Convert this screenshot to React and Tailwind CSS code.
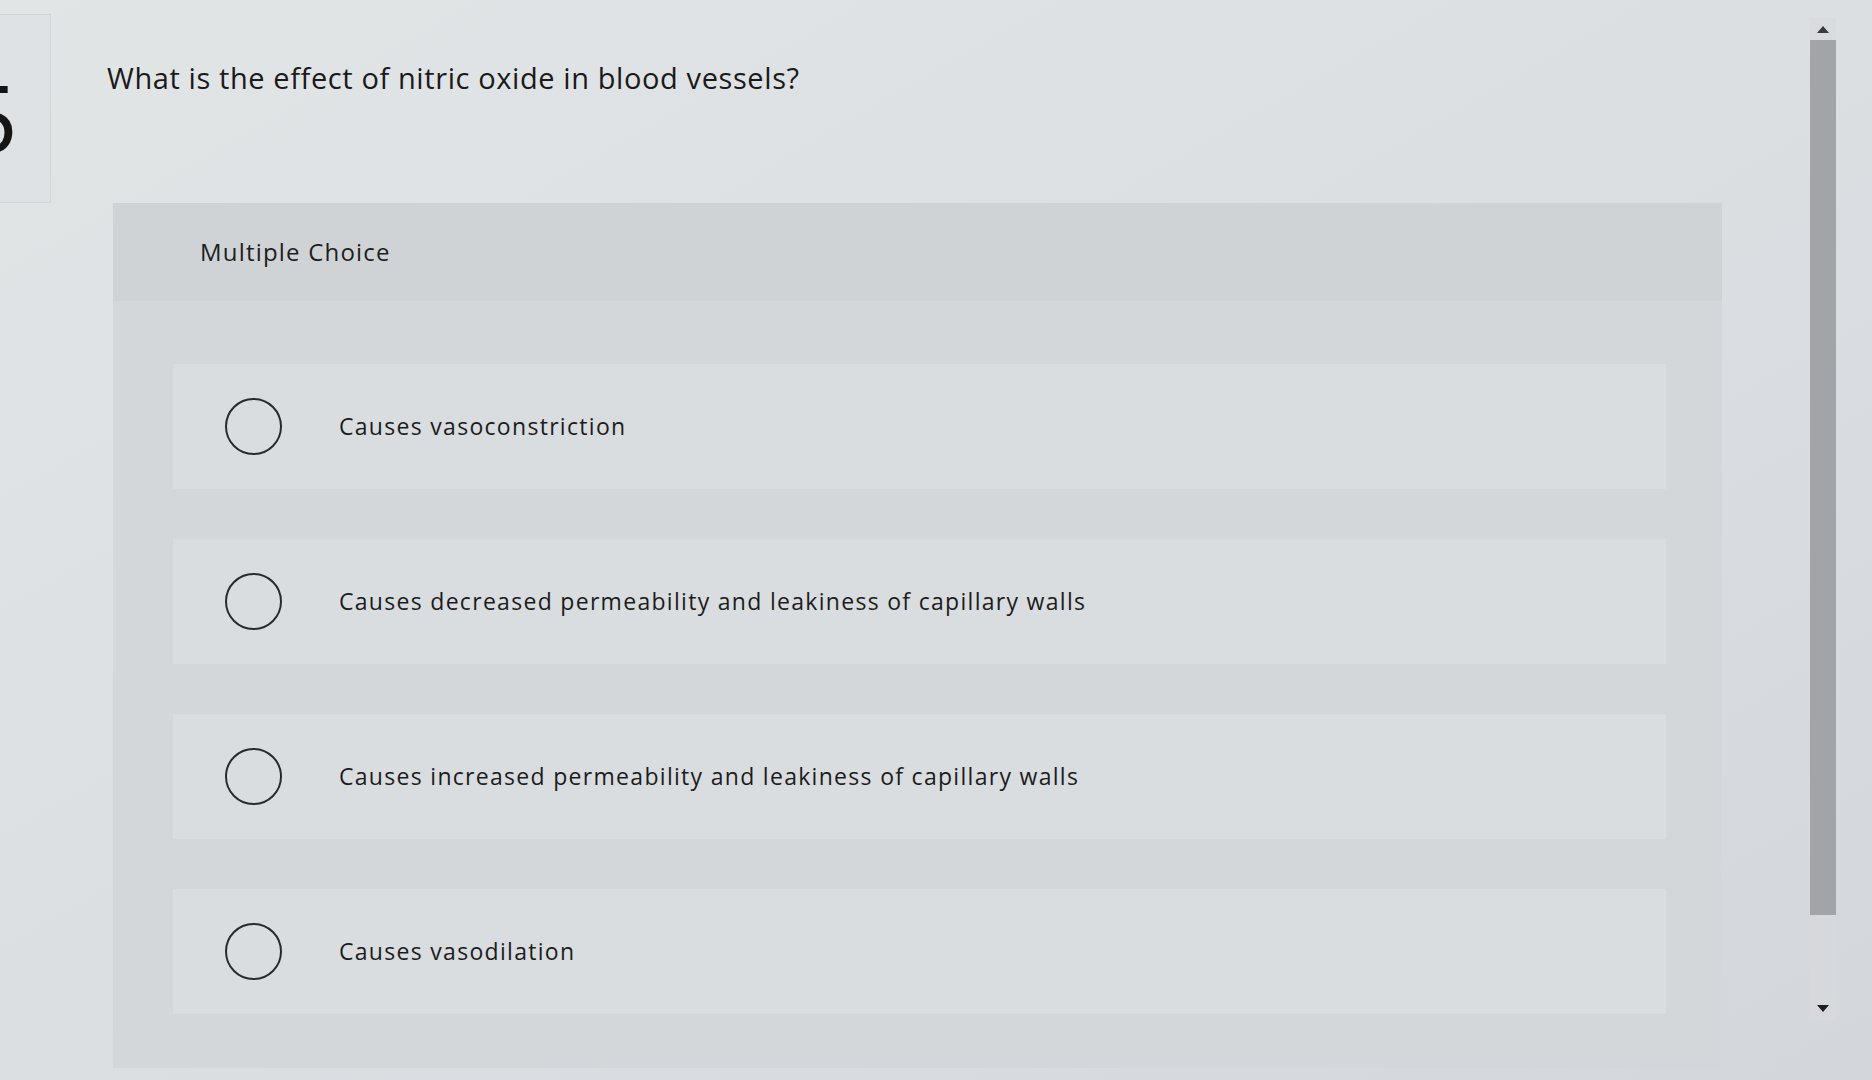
import React from "react";

const options = [
  "Causes vasoconstriction",
  "Causes decreased permeability and leakiness of capillary walls",
  "Causes increased permeability and leakiness of capillary walls",
  "Causes vasodilation",
];

export default function App() {
  return (
    <div
      className="w-[1872px] h-[1080px] overflow-hidden flex bg-gradient-to-br from-[#e2e5e6] via-[#dcdfe2] to-[#d3d7dc] text-[#1c1c1c]"
      style={{ fontFamily: "'Open Sans', Lato, sans-serif" }}
    >
      <div className="flex-1 flex">
        {/* left number card */}
        <div className="w-[51px] h-[189px] mt-[14px] shrink-0 overflow-hidden border border-l-0 border-[#d2d5d8] bg-[#dfe2e4] flex items-start">
          <span className="ml-[-36px] mt-[62px] text-[94px] leading-[80px] font-medium text-[#151515]">5</span>
        </div>

        {/* content */}
        <div className="ml-[56px] flex flex-col">
          <h1 className="mt-[60px] h-[36px] text-[29px] leading-[36px] tracking-[0.6px] font-normal text-[#1a1a1a]">
            What is the effect of nitric oxide in blood vessels?
          </h1>

          <div className="mt-[107px] ml-[6px] w-[1609px] bg-[#d4d7da] flex flex-col">
            <div className="h-[98px] bg-[#d0d3d6] flex items-center pl-[87px]">
              <span className="text-[24px] tracking-[1.2px] text-[#1e1e1e]">Multiple Choice</span>
            </div>
            <div className="flex flex-col gap-[50px] pt-[63px] pb-[54px] pl-[60px] pr-[56px]">
              {options.map((o) => (
                <div key={o} className="h-[125px] bg-[#dadde0] flex items-center pl-[52px]">
                  <div className="w-[57px] h-[57px] rounded-full border-2 border-[#2a2a2a] shrink-0" />
                  <span className="ml-[57px] text-[23px] tracking-[1.3px] text-[#1c1c1c]">{o}</span>
                </div>
              ))}
            </div>
          </div>
        </div>
      </div>

      {/* scrollbar */}
      <div className="w-[68px] shrink-0 flex flex-col items-center pr-[30px] pt-[18px]">
        <div className="w-[26px] h-[22px] bg-[#d9dbde] flex items-center justify-center">
          <svg width="12" height="7" viewBox="0 0 12 7"><path d="M0 7 L6 0 L12 7 Z" fill="#3a3a3a" /></svg>
        </div>
        <div className="w-[26px] h-[875px] bg-[#a2a4a8]" />
        <div className="w-[26px] h-[105px] bg-[#d6d8db] flex items-end justify-center pb-[8px]">
          <svg width="12" height="7" viewBox="0 0 12 7"><path d="M0 0 L6 7 L12 0 Z" fill="#1e1e1e" /></svg>
        </div>
      </div>
    </div>
  );
}
